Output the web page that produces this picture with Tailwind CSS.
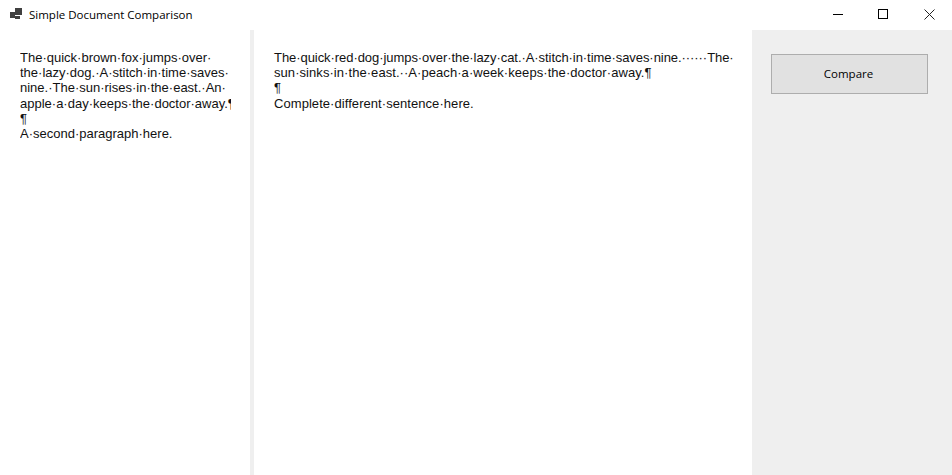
<!DOCTYPE html>
<html lang="en">
<head>
    <meta charset="UTF-8">
    <title>Simple Document Comparison</title>
    <script src="https://cdn.jsdelivr.net/npm/@tailwindcss/browser@4"></script>
</head>
<body class="w-[952px] h-[475px] overflow-hidden bg-white flex flex-col font-['Liberation_Sans',sans-serif] text-black">
    <!-- title bar -->
    <div class="h-[30px] flex items-center shrink-0">
        <svg class="ml-[10px] mb-[2px] w-[13px] h-[12px]" viewBox="0 0 13 12" fill="#404040">
            <rect x="0" y="4" width="5" height="6"/>
            <rect x="5" y="0" width="7" height="7"/>
            <rect x="5" y="8" width="5" height="3"/>
        </svg>
        <span class="ml-[6px] text-[11.5px] font-['Open_Sans',sans-serif]">Simple Document Comparison</span>
        <div class="ml-auto flex items-center">
            <svg class="w-[46px] h-[30px]" viewBox="0 0 46 30"><rect x="19" y="14" width="10" height="1" fill="#000"/></svg>
            <svg class="w-[46px] h-[30px]" viewBox="0 0 46 30"><rect x="18.5" y="9.5" width="9" height="9" fill="none" stroke="#000"/></svg>
            <svg class="w-[46px] h-[30px]" viewBox="0 0 46 30"><path d="M18.5 9.5 L28.5 19.5 M28.5 9.5 L18.5 19.5" stroke="#222" fill="none"/></svg>
        </div>
    </div>
    <div class="flex flex-1 min-h-0">
        <!-- left document -->
        <div class="w-[250px] pl-[20px] pt-[20px] text-[13px] leading-[15.2px] text-[#111]">
            <div class="w-[211px] overflow-hidden whitespace-nowrap">
                <div>The·quick·brown·fox·jumps·over·</div>
                <div>the·lazy·dog.·A·stitch·in·time·saves·</div>
                <div>nine.·The·sun·rises·in·the·east.·An·</div>
                <div>apple·a·day·keeps·the·doctor·away.¶</div>
                <div>¶</div>
                <div>A·second·paragraph·here.</div>
            </div>
        </div>
        <div class="w-[4px] bg-[#efefef]"></div>
        <!-- right document -->
        <div class="w-[498px] pl-[20px] pt-[20px] text-[13px] leading-[15.2px] text-[#111] whitespace-nowrap">
            <div class="tracking-[-0.06px]">The·quick·red·dog·jumps·over·the·lazy·cat.·A·stitch·in·time·saves·nine.······The·</div>
            <div class="tracking-[0.06px]">sun·sinks·in·the·east.··A·peach·a·week·keeps·the·doctor·away.¶</div>
            <div>¶</div>
            <div class="tracking-[0.06px]">Complete·different·sentence·here.</div>
        </div>
        <!-- side panel -->
        <div class="flex-1 bg-[#efefef] pt-[24px] pl-[19px]">
            <button class="w-[157px] h-[40px] pr-[2px] bg-[#e1e1e1] border border-[#adadad] text-[11.5px] font-['Open_Sans',sans-serif]">Compare</button>
        </div>
    </div>
</body>
</html>
